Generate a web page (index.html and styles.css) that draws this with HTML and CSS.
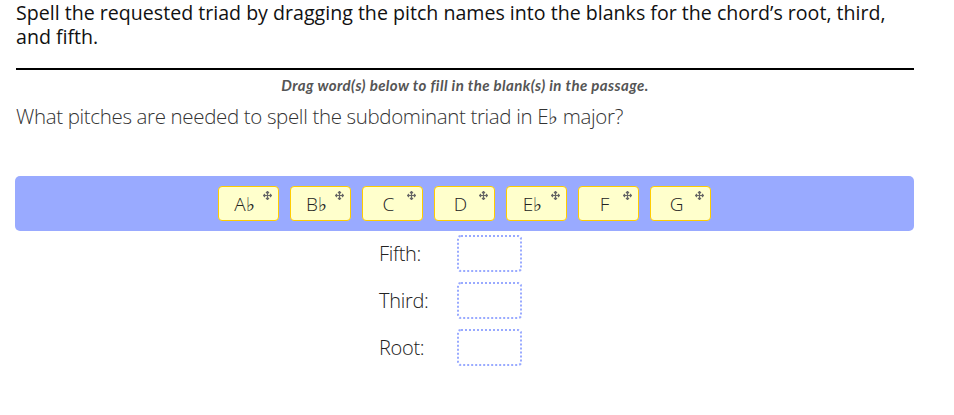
FILE: index.html
```html
<!DOCTYPE html>
<html>
<head>
<meta charset="utf-8">
<link rel="stylesheet" href="styles.css">
</head>
<body>
<div class="page">
  <p class="prompt">Spell the requested triad by dragging the pitch names into the blanks for the chord’s root, third, and fifth.</p>
  <hr class="rule">
  <p class="instr">Drag word(s) below to fill in the blank(s) in the passage.</p>
  <p class="question">What pitches are needed to spell the subdominant triad in E♭ major?</p>
  <div class="bank">
    <div class="chip">A♭<svg class="mv" viewBox="0 0 9 9"><path d="M4.5 0.5v8M0.5 4.5h8M3 2l1.5-1.5L6 2M3 7l1.5 1.5L6 7M2 3L0.5 4.5 2 6M7 3l1.5 1.5L7 6"/></svg></div>
    <div class="chip">B♭<svg class="mv" viewBox="0 0 9 9"><path d="M4.5 0.5v8M0.5 4.5h8M3 2l1.5-1.5L6 2M3 7l1.5 1.5L6 7M2 3L0.5 4.5 2 6M7 3l1.5 1.5L7 6"/></svg></div>
    <div class="chip">C<svg class="mv" viewBox="0 0 9 9"><path d="M4.5 0.5v8M0.5 4.5h8M3 2l1.5-1.5L6 2M3 7l1.5 1.5L6 7M2 3L0.5 4.5 2 6M7 3l1.5 1.5L7 6"/></svg></div>
    <div class="chip">D<svg class="mv" viewBox="0 0 9 9"><path d="M4.5 0.5v8M0.5 4.5h8M3 2l1.5-1.5L6 2M3 7l1.5 1.5L6 7M2 3L0.5 4.5 2 6M7 3l1.5 1.5L7 6"/></svg></div>
    <div class="chip">E♭<svg class="mv" viewBox="0 0 9 9"><path d="M4.5 0.5v8M0.5 4.5h8M3 2l1.5-1.5L6 2M3 7l1.5 1.5L6 7M2 3L0.5 4.5 2 6M7 3l1.5 1.5L7 6"/></svg></div>
    <div class="chip">F<svg class="mv" viewBox="0 0 9 9"><path d="M4.5 0.5v8M0.5 4.5h8M3 2l1.5-1.5L6 2M3 7l1.5 1.5L6 7M2 3L0.5 4.5 2 6M7 3l1.5 1.5L7 6"/></svg></div>
    <div class="chip">G<svg class="mv" viewBox="0 0 9 9"><path d="M4.5 0.5v8M0.5 4.5h8M3 2l1.5-1.5L6 2M3 7l1.5 1.5L6 7M2 3L0.5 4.5 2 6M7 3l1.5 1.5L7 6"/></svg></div>
  </div>
  <div class="blanks">
    <span class="lbl">Fifth:</span><span class="blank"></span>
    <span class="lbl">Third:</span><span class="blank"></span>
    <span class="lbl">Root:</span><span class="blank"></span>
  </div>
</div>
</body>
</html>
```
FILE: styles.css
```css
html, body { margin: 0; padding: 0; background: #fff; }
body { font-family: "Lato", "Open Sans", sans-serif; color: #111; }
.page { padding: 0 40px 0 16px; width: 898px; }
.prompt { margin: 0; padding-top: 1px; font-family: "Open Sans", sans-serif; font-size: 19.6px; line-height: 24px; color: #111; }
.rule { margin: 19px 0 0 0; border: 0; height: 2px; background: #000; }
.instr { margin: 6px 0 0 0; text-align: center; font-size: 15px; letter-spacing: 0.4px; font-weight: bold; font-style: italic; color: #555; line-height: 18px; }
.question { margin: 9px 0 0 0; font-family: "Open Sans", sans-serif; font-size: 20.5px; letter-spacing: -0.35px; font-weight: 300; color: #333; line-height: 26px; }
.bank { margin-top: 47px; margin-left: -1px; height: 55px; background: #99aaff; border-radius: 5px; display: flex; align-items: center; padding-left: 203px; gap: 11px; }
.chip { position: relative; box-sizing: border-box; width: 61px; height: 35px; background: #ffffcc; border: 1px solid #ffcc00; border-radius: 4px; display: flex; align-items: center; justify-content: center; font-family: "Open Sans", "DejaVu Sans", sans-serif; font-size: 19px; font-weight: 300; color: #222; padding-right: 8px; }
.mv { position: absolute; top: 4px; right: 6px; width: 9px; height: 9px; fill: none; stroke: #666; stroke-width: 1.2; }
.blanks { display: grid; grid-template-columns: 78px 65px; row-gap: 10px; column-gap: 0; margin: 4px 0 0 363px; align-items: center; }
.lbl { font-family: "Open Sans", sans-serif; font-size: 20px; letter-spacing: -0.3px; font-weight: 300; color: #222; }
.blank { box-sizing: border-box; height: 37px; border: 2px dotted #99aaff; border-radius: 4px; }
```
